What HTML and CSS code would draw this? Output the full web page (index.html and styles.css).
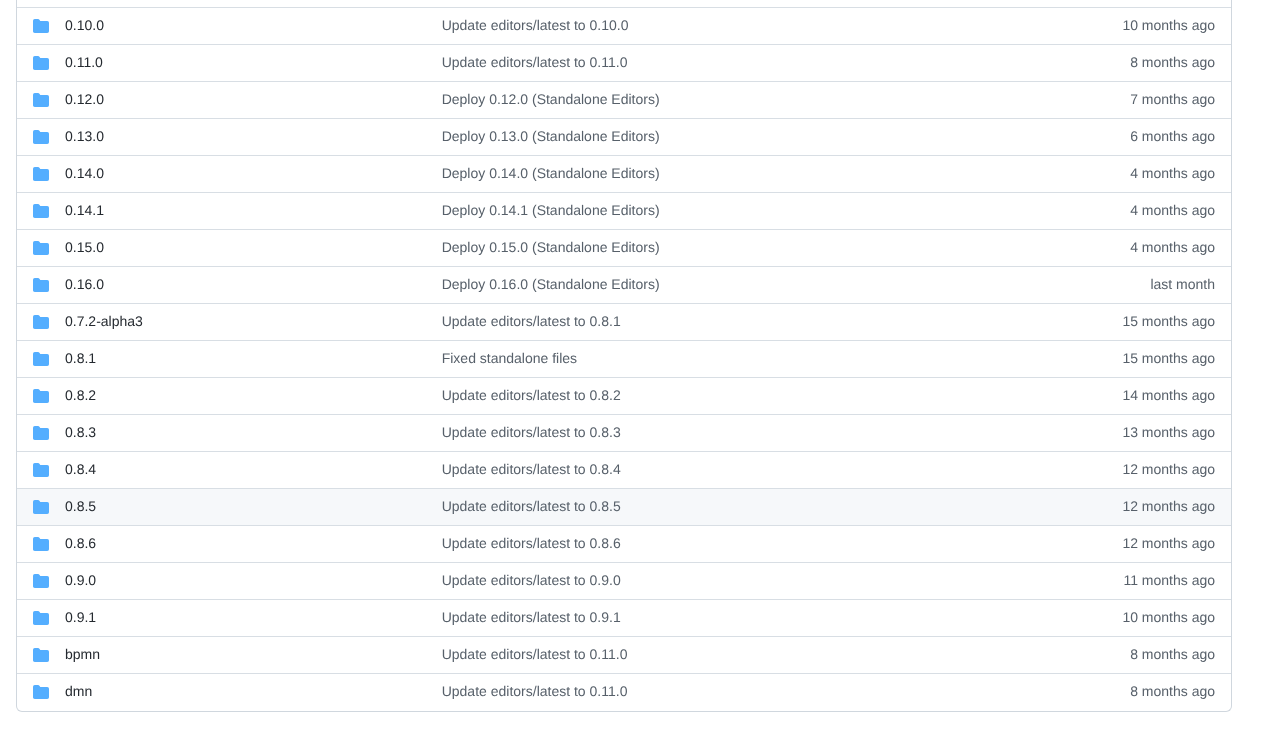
FILE: index.html
```html
<!DOCTYPE html>
<html lang="en">
<head>
<meta charset="utf-8">
<title>Files</title>
<link rel="stylesheet" href="styles.css">
</head>
<body>
<svg class="sprite" width="0" height="0" aria-hidden="true"><symbol id="folder" viewBox="0 0 16 16"><path d="M1.75 1A1.75 1.75 0 0 0 0 2.75v10.5C0 14.216.784 15 1.75 15h12.5A1.75 1.75 0 0 0 16 13.25v-8.5A1.75 1.75 0 0 0 14.25 3H7.5a.25.25 0 0 1-.2-.1l-.9-1.2C6.07 1.26 5.55 1 5 1H1.75Z"/></symbol></svg>
<main class="files">
<div class="row"><svg class="icon"><use href="#folder"/></svg><span class="name">0.10.0</span><span class="msg">Update editors/latest to 0.10.0</span><span class="age">10 months ago</span></div>
<div class="row"><svg class="icon"><use href="#folder"/></svg><span class="name">0.11.0</span><span class="msg">Update editors/latest to 0.11.0</span><span class="age">8 months ago</span></div>
<div class="row"><svg class="icon"><use href="#folder"/></svg><span class="name">0.12.0</span><span class="msg">Deploy 0.12.0 (Standalone Editors)</span><span class="age">7 months ago</span></div>
<div class="row"><svg class="icon"><use href="#folder"/></svg><span class="name">0.13.0</span><span class="msg">Deploy 0.13.0 (Standalone Editors)</span><span class="age">6 months ago</span></div>
<div class="row"><svg class="icon"><use href="#folder"/></svg><span class="name">0.14.0</span><span class="msg">Deploy 0.14.0 (Standalone Editors)</span><span class="age">4 months ago</span></div>
<div class="row"><svg class="icon"><use href="#folder"/></svg><span class="name">0.14.1</span><span class="msg">Deploy 0.14.1 (Standalone Editors)</span><span class="age">4 months ago</span></div>
<div class="row"><svg class="icon"><use href="#folder"/></svg><span class="name">0.15.0</span><span class="msg">Deploy 0.15.0 (Standalone Editors)</span><span class="age">4 months ago</span></div>
<div class="row"><svg class="icon"><use href="#folder"/></svg><span class="name">0.16.0</span><span class="msg">Deploy 0.16.0 (Standalone Editors)</span><span class="age">last month</span></div>
<div class="row"><svg class="icon"><use href="#folder"/></svg><span class="name">0.7.2-alpha3</span><span class="msg">Update editors/latest to 0.8.1</span><span class="age">15 months ago</span></div>
<div class="row"><svg class="icon"><use href="#folder"/></svg><span class="name">0.8.1</span><span class="msg">Fixed standalone files</span><span class="age">15 months ago</span></div>
<div class="row"><svg class="icon"><use href="#folder"/></svg><span class="name">0.8.2</span><span class="msg">Update editors/latest to 0.8.2</span><span class="age">14 months ago</span></div>
<div class="row"><svg class="icon"><use href="#folder"/></svg><span class="name">0.8.3</span><span class="msg">Update editors/latest to 0.8.3</span><span class="age">13 months ago</span></div>
<div class="row"><svg class="icon"><use href="#folder"/></svg><span class="name">0.8.4</span><span class="msg">Update editors/latest to 0.8.4</span><span class="age">12 months ago</span></div>
<div class="row hovered"><svg class="icon"><use href="#folder"/></svg><span class="name">0.8.5</span><span class="msg">Update editors/latest to 0.8.5</span><span class="age">12 months ago</span></div>
<div class="row"><svg class="icon"><use href="#folder"/></svg><span class="name">0.8.6</span><span class="msg">Update editors/latest to 0.8.6</span><span class="age">12 months ago</span></div>
<div class="row"><svg class="icon"><use href="#folder"/></svg><span class="name">0.9.0</span><span class="msg">Update editors/latest to 0.9.0</span><span class="age">11 months ago</span></div>
<div class="row"><svg class="icon"><use href="#folder"/></svg><span class="name">0.9.1</span><span class="msg">Update editors/latest to 0.9.1</span><span class="age">10 months ago</span></div>
<div class="row"><svg class="icon"><use href="#folder"/></svg><span class="name">bpmn</span><span class="msg">Update editors/latest to 0.11.0</span><span class="age">8 months ago</span></div>
<div class="row"><svg class="icon"><use href="#folder"/></svg><span class="name">dmn</span><span class="msg">Update editors/latest to 0.11.0</span><span class="age">8 months ago</span></div>
</main>
</body>
</html>
```
FILE: styles.css
```css
html, body {
  margin: 0;
  height: 732px;
  overflow: hidden;
  background: #fff;
}
body {
  font-family: "Liberation Sans", Arial, sans-serif;
  font-size: 14px;
  line-height: 20px;
  color: #24292f;
  text-rendering: geometricPrecision;
}
.sprite {
  display: block;
  height: 0;
}
.files {
  width: 1216px;
  margin-left: 16px;
  padding: 7px 0 1px;
  box-sizing: border-box;
  border: 1px solid #d0d7de;
  border-top: 0;
  border-radius: 0 0 6px 6px;
  will-change: transform;
}
.row {
  display: grid;
  grid-template-columns: 16px 360.7px 1fr auto;
  column-gap: 16px;
  align-items: center;
  height: 37px;
  box-sizing: border-box;
  padding: 0 16px;
  border-top: 1px solid #d8dee4;
}
.hovered {
  background: #f6f8fa;
}
.icon {
  width: 16px;
  height: 16px;
  fill: #54aeff;
}
.name,
.msg,
.age {
  margin-bottom: 2px;
}
.name {
  color: #24292f;
}
.msg,
.age {
  color: #57606a;
}
.age {
  text-align: right;
}
```
